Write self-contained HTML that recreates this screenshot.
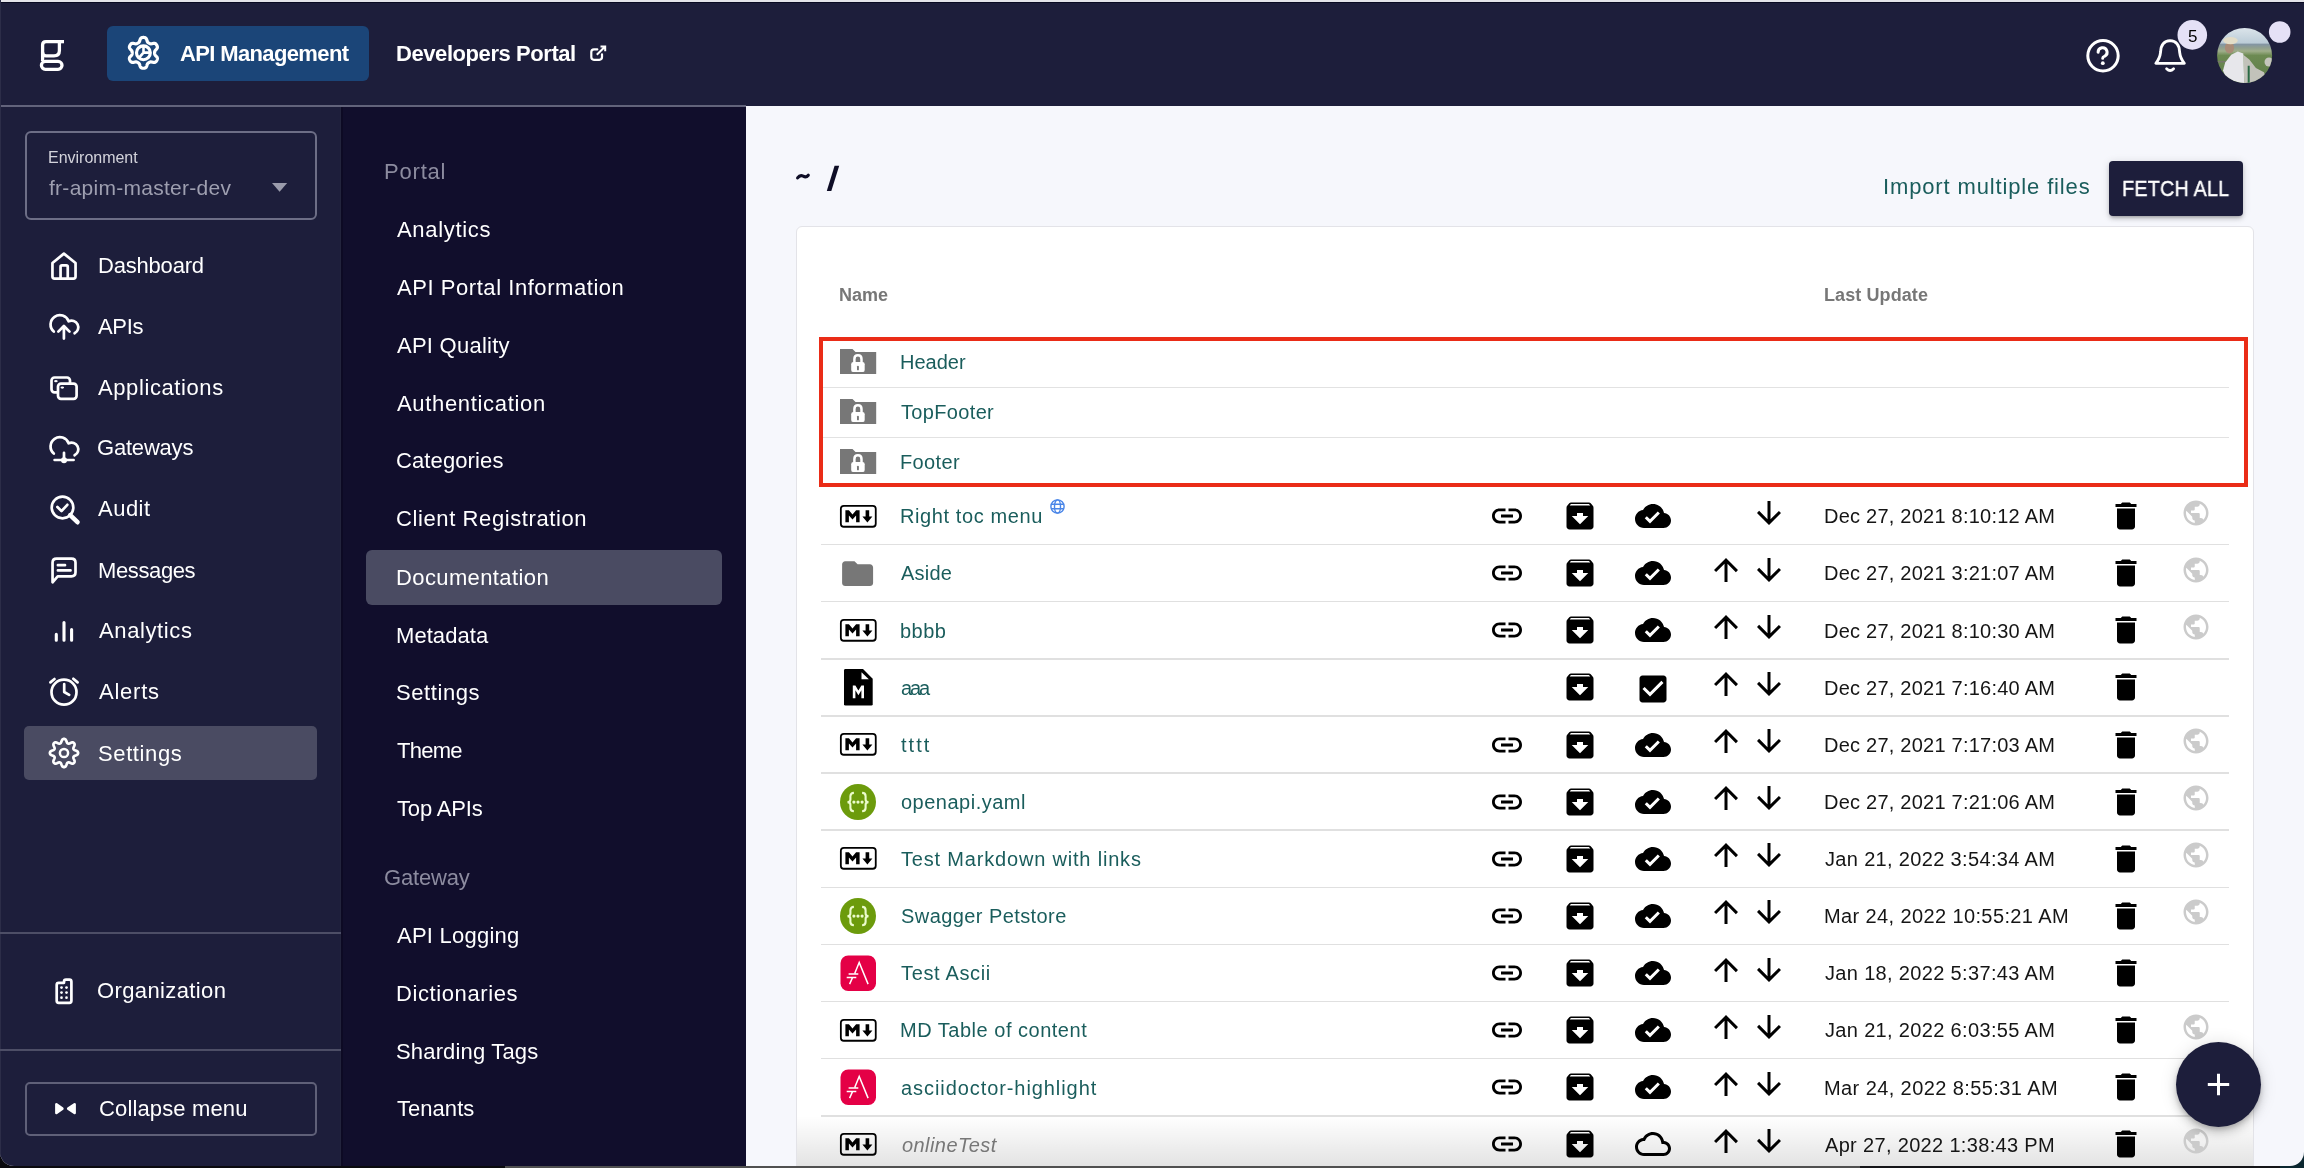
<!DOCTYPE html>
<html><head><meta charset="utf-8"><style>
html,body{margin:0;padding:0;width:2304px;height:1168px;overflow:hidden;background:#505050}
body{position:relative;font-family:"Liberation Sans",sans-serif}
.tx{position:absolute;white-space:pre;will-change:transform}
.ic{position:absolute;overflow:visible}
</style></head><body>
<div style="position:absolute;left:0;top:1140px;width:505px;height:28px;background:#0a0a0e"></div>
<div style="position:absolute;left:1860px;top:1140px;width:444px;height:28px;background:#141418"></div>
<div style="position:absolute;left:2280px;top:1140px;width:24px;height:28px;background:#0b2730"></div>
<div style="position:absolute;left:0;top:0;width:2304px;height:1166px;border-radius:0 0 14px 14px;overflow:hidden;background:#f6f7fc">
<div style="position:absolute;left:0;top:0;width:2304px;height:106px;background:#1d1e3b"></div>
<div style="position:absolute;left:0;top:0;width:2304px;height:1.5px;background:#e4e4ea"></div>
<div style="position:absolute;left:0;top:1.5px;width:2304px;height:1.5px;background:#090a22"></div>
<div style="position:absolute;left:0;top:105px;width:746px;height:2px;background:#62637b"></div>
<div style="position:absolute;left:745px;top:107px;width:1px;height:1061px;background:#07051c"></div>
<div style="position:absolute;left:0;top:107px;width:341px;height:1061px;background:#1d1e3b"></div>
<div style="position:absolute;left:341px;top:107px;width:405px;height:1061px;background:#110e2c"></div>
<div style="position:absolute;left:0;top:0;width:1px;height:1168px;background:#2c2d48"></div>
<div style="position:absolute;left:340px;top:107px;width:1px;height:1061px;background:#23243d"></div>
<div style="position:absolute;left:341px;top:107px;width:2px;height:1061px;background:#0d0a24"></div>
<div style="position:absolute;left:107px;top:26px;width:262px;height:55px;border-radius:6px;background:#1b4578"></div>
<div style="position:absolute;left:24.5px;top:131px;width:288px;height:85px;border:2px solid #6d6e86;border-radius:6px"></div>
<svg class="ic" style="left:272px;top:182.8px;width:15.2px;height:8.8px" viewBox="0 0 15.2 8.8"><path d="M0 0H15.2L7.6 8.8Z" fill="#9a9bab"/></svg>
<div style="position:absolute;left:24px;top:726px;width:293px;height:54px;border-radius:5px;background:#4a4b62"></div>
<div style="position:absolute;left:366px;top:550px;width:356px;height:55px;border-radius:6px;background:#4a4b62"></div>
<div style="position:absolute;left:0;top:932px;width:341px;height:2px;background:#4d4e66"></div>
<div style="position:absolute;left:0;top:1049px;width:341px;height:2px;background:#4d4e66"></div>
<div style="position:absolute;left:24.5px;top:1081.5px;width:288px;height:50px;border:2px solid #5f6078;border-radius:5px"></div>
<div style="position:absolute;left:2109px;top:161px;width:134px;height:55px;border-radius:4px;background:#1d1e3b;box-shadow:0 3px 3px -2px rgba(0,0,0,.2),0 3px 4px 0 rgba(0,0,0,.14),0 1px 8px 0 rgba(0,0,0,.12)"></div>
<div style="position:absolute;left:796px;top:226px;width:1456px;height:1000px;border:1px solid #e3e3e8;border-radius:6px;background:#fff"></div>
<svg class="ic" style="left:790px;top:160px;width:60px;height:36px" viewBox="790 160 60 36"><path d="M797.6 177.9Q800 174.6 803.2 176.2Q806.2 177.8 808.3 175.2" fill="none" stroke="#0e0d26" stroke-width="3.1" stroke-linecap="round"/><path d="M834.6 165.8H839.2L831.3 190.9H826.8Z" fill="#0e0d26"/></svg>
<div style="position:absolute;left:823px;top:386.5px;width:1406px;height:1px;background:#e2e2e2"></div>
<div style="position:absolute;left:823px;top:436.5px;width:1406px;height:1px;background:#e2e2e2"></div>
<div style="position:absolute;left:821px;top:543.80px;width:1408px;height:1.5px;background:#e0e0e0"></div>
<div style="position:absolute;left:821px;top:600.93px;width:1408px;height:1.5px;background:#e0e0e0"></div>
<div style="position:absolute;left:821px;top:658.06px;width:1408px;height:1.5px;background:#e0e0e0"></div>
<div style="position:absolute;left:821px;top:715.19px;width:1408px;height:1.5px;background:#e0e0e0"></div>
<div style="position:absolute;left:821px;top:772.32px;width:1408px;height:1.5px;background:#e0e0e0"></div>
<div style="position:absolute;left:821px;top:829.45px;width:1408px;height:1.5px;background:#e0e0e0"></div>
<div style="position:absolute;left:821px;top:886.58px;width:1408px;height:1.5px;background:#e0e0e0"></div>
<div style="position:absolute;left:821px;top:943.71px;width:1408px;height:1.5px;background:#e0e0e0"></div>
<div style="position:absolute;left:821px;top:1000.84px;width:1408px;height:1.5px;background:#e0e0e0"></div>
<div style="position:absolute;left:821px;top:1057.97px;width:1408px;height:1.5px;background:#e0e0e0"></div>
<div style="position:absolute;left:821px;top:1115.10px;width:1408px;height:1.5px;background:#e0e0e0"></div>
<div style="position:absolute;left:819px;top:337px;width:1421px;height:142px;border:4px solid #ea2c17"></div>
<div style="position:absolute;left:797px;top:1116px;width:1456px;height:50px;background:linear-gradient(rgba(0,0,0,0),rgba(0,0,0,.11))"></div>
<svg class="ic" style="left:0;top:0;width:2304px;height:1168px" viewBox="0 0 2304 1168"><g fill="none" stroke="#ffffff" stroke-width="2.7" stroke-linecap="round" stroke-linejoin="round"><path d="M52.45 263 L63.9 253.6 L75.55 263 V276.5 Q75.55 278.55 73.5 278.55 H54.5 Q52.45 278.55 52.45 276.5 Z"/><path d="M60.55 278.5 V266.9 Q60.55 265.45 62 265.45 H66.3 Q67.75 265.45 67.75 266.9 V278.5"/><path d="M53.8 331.5 A9.3 9.3 0 1 1 68.6 321.3 A5.4 5.4 0 0 1 74.6 333.3"/><path d="M63.9 338.6 V326 M58.3 331.6 L63.9 326 L69.5 331.6"/><rect x="51.5" y="377.5" width="18.5" height="14.8" rx="3"/><rect x="58" y="383.6" width="18.6" height="15.2" rx="3" fill="#1d1e3b"/><path d="M53.8 453.5 A9.3 9.3 0 1 1 68.6 443.3 A5.4 5.4 0 0 1 74.6 455.3"/><path d="M64 452.8 V459.5 M54.6 460 H73.6"/><circle cx="62.5" cy="507.5" r="10.8"/><path d="M57.4 507 L61.5 511.1 L67.3 504.8"/><path d="M52.55 582.3 V562.6 Q52.55 558.55 56.6 558.55 H71.45 Q75.5 558.55 75.5 562.6 V572.35 Q75.5 576.4 71.45 576.4 H57.7 Z"/><path d="M57.9 565.2 H65 M57.9 570.4 H70.5"/><circle cx="64" cy="692.2" r="12.5"/><path d="M64.2 684.2 V692 L69.2 694.9 M50.4 682.4 L54.5 679 M73.3 678.8 L77.6 682.4"/><path d="M78.10 753.00 L78.07 753.37 L77.98 753.73 L77.83 754.09 L77.58 754.43 L77.24 754.74 L76.79 755.03 L76.25 755.27 L75.68 755.48 L75.14 755.67 L74.67 755.86 L74.30 756.05 L74.02 756.25 L73.80 756.47 L73.64 756.70 L73.52 756.94 L73.43 757.20 L73.38 757.48 L73.38 757.78 L73.44 758.13 L73.57 758.52 L73.77 758.98 L74.01 759.50 L74.27 760.06 L74.47 760.61 L74.59 761.13 L74.61 761.60 L74.55 762.01 L74.41 762.37 L74.21 762.69 L73.97 762.97 L73.69 763.21 L73.37 763.41 L73.01 763.55 L72.60 763.61 L72.13 763.59 L71.61 763.47 L71.06 763.27 L70.50 763.01 L69.98 762.77 L69.52 762.57 L69.13 762.44 L68.78 762.38 L68.48 762.38 L68.20 762.43 L67.94 762.52 L67.70 762.64 L67.47 762.80 L67.25 763.02 L67.05 763.30 L66.86 763.67 L66.67 764.14 L66.48 764.68 L66.27 765.25 L66.03 765.79 L65.74 766.24 L65.43 766.58 L65.09 766.83 L64.73 766.98 L64.37 767.07 L64.00 767.10 L63.63 767.07 L63.27 766.98 L62.91 766.83 L62.57 766.58 L62.26 766.24 L61.97 765.79 L61.73 765.25 L61.52 764.68 L61.33 764.14 L61.14 763.67 L60.95 763.30 L60.75 763.02 L60.53 762.80 L60.30 762.64 L60.06 762.52 L59.80 762.43 L59.52 762.38 L59.22 762.38 L58.87 762.44 L58.48 762.57 L58.02 762.77 L57.50 763.01 L56.94 763.27 L56.39 763.47 L55.87 763.59 L55.40 763.61 L54.99 763.55 L54.63 763.41 L54.31 763.21 L54.03 762.97 L53.79 762.69 L53.59 762.37 L53.45 762.01 L53.39 761.60 L53.41 761.13 L53.53 760.61 L53.73 760.06 L53.99 759.50 L54.23 758.98 L54.43 758.52 L54.56 758.13 L54.62 757.78 L54.62 757.48 L54.57 757.20 L54.48 756.94 L54.36 756.70 L54.20 756.47 L53.98 756.25 L53.70 756.05 L53.33 755.86 L52.86 755.67 L52.32 755.48 L51.75 755.27 L51.21 755.03 L50.76 754.74 L50.42 754.43 L50.17 754.09 L50.02 753.73 L49.93 753.37 L49.90 753.00 L49.93 752.63 L50.02 752.27 L50.17 751.91 L50.42 751.57 L50.76 751.26 L51.21 750.97 L51.75 750.73 L52.32 750.52 L52.86 750.33 L53.33 750.14 L53.70 749.95 L53.98 749.75 L54.20 749.53 L54.36 749.30 L54.48 749.06 L54.57 748.80 L54.62 748.52 L54.62 748.22 L54.56 747.87 L54.43 747.48 L54.23 747.02 L53.99 746.50 L53.73 745.94 L53.53 745.39 L53.41 744.87 L53.39 744.40 L53.45 743.99 L53.59 743.63 L53.79 743.31 L54.03 743.03 L54.31 742.79 L54.63 742.59 L54.99 742.45 L55.40 742.39 L55.87 742.41 L56.39 742.53 L56.94 742.73 L57.50 742.99 L58.02 743.23 L58.48 743.43 L58.87 743.56 L59.22 743.62 L59.52 743.62 L59.80 743.57 L60.06 743.48 L60.30 743.36 L60.53 743.20 L60.75 742.98 L60.95 742.70 L61.14 742.33 L61.33 741.86 L61.52 741.32 L61.73 740.75 L61.97 740.21 L62.26 739.76 L62.57 739.42 L62.91 739.17 L63.27 739.02 L63.63 738.93 L64.00 738.90 L64.37 738.93 L64.73 739.02 L65.09 739.17 L65.43 739.42 L65.74 739.76 L66.03 740.21 L66.27 740.75 L66.48 741.32 L66.67 741.86 L66.86 742.33 L67.05 742.70 L67.25 742.98 L67.47 743.20 L67.70 743.36 L67.94 743.48 L68.20 743.57 L68.48 743.62 L68.78 743.62 L69.13 743.56 L69.52 743.43 L69.98 743.23 L70.50 742.99 L71.06 742.73 L71.61 742.53 L72.13 742.41 L72.60 742.39 L73.01 742.45 L73.37 742.59 L73.69 742.79 L73.97 743.03 L74.21 743.31 L74.41 743.63 L74.55 743.99 L74.61 744.40 L74.59 744.87 L74.47 745.39 L74.27 745.94 L74.01 746.50 L73.77 747.02 L73.57 747.48 L73.44 747.87 L73.38 748.22 L73.38 748.52 L73.43 748.80 L73.52 749.06 L73.64 749.30 L73.80 749.53 L74.02 749.75 L74.30 749.95 L74.67 750.14 L75.14 750.33 L75.68 750.52 L76.25 750.73 L76.79 750.97 L77.24 751.26 L77.58 751.57 L77.83 751.91 L77.98 752.27 L78.07 752.63Z"/><circle cx="64" cy="753" r="4.1" stroke-width="2.5"/><path d="M56.7 1001 V984.8 Q56.7 982.8 58.7 982.8 H64 V981.7 Q64 979.7 66 979.7 H69.4 Q71.4 979.7 71.4 981.7 V1000.8 Q71.4 1002.8 69.4 1002.8 H58.7 Q56.7 1002.8 56.7 1000.8Z"/><path d="M597.3 49.4 H594 Q591.3 49.4 591.3 52.1 V57.1 Q591.3 59.8 594 59.8 H599.3 Q602 59.8 602 57.1 V54.3" stroke-width="2.2"/><path d="M596.8 54.8 L604.6 47 M600.5 46.6 H605.2 V51.3" stroke-width="2" stroke-linecap="butt" stroke-linejoin="miter"/><path d="M154.60 52.85 L154.60 53.14 L154.61 53.44 L154.64 53.73 L154.68 54.04 L154.75 54.34 L154.88 54.67 L155.09 55.02 L155.39 55.40 L155.79 55.82 L156.25 56.29 L156.69 56.79 L157.04 57.28 L157.27 57.76 L157.38 58.22 L157.40 58.65 L157.34 59.06 L157.24 59.45 L157.10 59.83 L156.93 60.19 L156.74 60.55 L156.52 60.89 L156.29 61.22 L156.03 61.53 L155.75 61.82 L155.42 62.07 L155.04 62.27 L154.59 62.41 L154.06 62.45 L153.45 62.39 L152.80 62.25 L152.17 62.09 L151.60 61.96 L151.12 61.89 L150.72 61.88 L150.37 61.93 L150.07 62.02 L149.78 62.14 L149.52 62.27 L149.26 62.41 L149.00 62.55 L148.75 62.70 L148.50 62.86 L148.25 63.02 L148.01 63.21 L147.78 63.43 L147.57 63.70 L147.37 64.05 L147.19 64.51 L147.02 65.07 L146.84 65.70 L146.64 66.33 L146.38 66.88 L146.08 67.32 L145.74 67.64 L145.38 67.87 L145.00 68.03 L144.60 68.13 L144.20 68.20 L143.80 68.24 L143.40 68.25 L143.00 68.24 L142.60 68.20 L142.20 68.13 L141.80 68.03 L141.42 67.87 L141.06 67.64 L140.72 67.32 L140.42 66.88 L140.16 66.33 L139.96 65.70 L139.78 65.07 L139.61 64.51 L139.43 64.05 L139.23 63.70 L139.02 63.43 L138.79 63.21 L138.55 63.02 L138.30 62.86 L138.05 62.70 L137.80 62.55 L137.54 62.41 L137.28 62.27 L137.02 62.14 L136.73 62.02 L136.43 61.93 L136.08 61.88 L135.68 61.89 L135.20 61.96 L134.63 62.09 L134.00 62.25 L133.35 62.39 L132.74 62.45 L132.21 62.41 L131.76 62.27 L131.38 62.07 L131.05 61.82 L130.77 61.53 L130.51 61.22 L130.28 60.89 L130.06 60.55 L129.87 60.19 L129.70 59.83 L129.56 59.45 L129.46 59.06 L129.40 58.65 L129.42 58.22 L129.53 57.76 L129.76 57.28 L130.11 56.79 L130.55 56.29 L131.01 55.82 L131.41 55.40 L131.71 55.02 L131.92 54.67 L132.05 54.34 L132.12 54.04 L132.16 53.73 L132.19 53.44 L132.20 53.14 L132.20 52.85 L132.20 52.56 L132.19 52.26 L132.16 51.97 L132.12 51.66 L132.05 51.36 L131.92 51.03 L131.71 50.68 L131.41 50.30 L131.01 49.88 L130.55 49.41 L130.11 48.91 L129.76 48.42 L129.53 47.94 L129.42 47.48 L129.40 47.05 L129.46 46.64 L129.56 46.25 L129.70 45.87 L129.87 45.51 L130.06 45.15 L130.28 44.81 L130.51 44.48 L130.77 44.17 L131.05 43.88 L131.38 43.63 L131.76 43.43 L132.21 43.29 L132.74 43.25 L133.35 43.31 L134.00 43.45 L134.63 43.61 L135.20 43.74 L135.68 43.81 L136.08 43.82 L136.43 43.77 L136.73 43.68 L137.02 43.56 L137.28 43.43 L137.54 43.29 L137.80 43.15 L138.05 43.00 L138.30 42.84 L138.55 42.68 L138.79 42.49 L139.02 42.27 L139.23 42.00 L139.43 41.65 L139.61 41.19 L139.78 40.63 L139.96 40.00 L140.16 39.37 L140.42 38.82 L140.72 38.38 L141.06 38.06 L141.42 37.83 L141.80 37.67 L142.20 37.57 L142.60 37.50 L143.00 37.46 L143.40 37.45 L143.80 37.46 L144.20 37.50 L144.60 37.57 L145.00 37.67 L145.38 37.83 L145.74 38.06 L146.08 38.38 L146.38 38.82 L146.64 39.37 L146.84 40.00 L147.02 40.63 L147.19 41.19 L147.37 41.65 L147.57 42.00 L147.78 42.27 L148.01 42.49 L148.25 42.68 L148.50 42.84 L148.75 43.00 L149.00 43.15 L149.26 43.29 L149.52 43.43 L149.78 43.56 L150.07 43.68 L150.37 43.77 L150.72 43.82 L151.12 43.81 L151.60 43.74 L152.17 43.61 L152.80 43.45 L153.45 43.31 L154.06 43.25 L154.59 43.29 L155.04 43.43 L155.42 43.63 L155.75 43.88 L156.03 44.17 L156.29 44.48 L156.52 44.81 L156.74 45.15 L156.93 45.51 L157.10 45.87 L157.24 46.25 L157.34 46.64 L157.40 47.05 L157.38 47.48 L157.27 47.94 L157.04 48.42 L156.69 48.91 L156.25 49.41 L155.79 49.88 L155.39 50.30 L155.09 50.68 L154.88 51.03 L154.75 51.36 L154.68 51.66 L154.64 51.97 L154.61 52.26 L154.60 52.56Z" stroke-width="3.2"/><circle cx="143.4" cy="52.85" r="6.9" stroke-width="3.2"/><path d="M143.5 52.6 V46.5 M143.5 52.6 H149.8 M143.5 52.6 L139.6 57.2" stroke-width="2.6"/><path d="M12.6 11.8" /></g><g fill="#ffffff"><circle cx="64" cy="460.3" r="3"/><path d="M70.2 515.2 L77.5 522.2" stroke="#fff" stroke-width="4.6" stroke-linecap="round"/><circle cx="61.5" cy="987.6" r="1.35"/><circle cx="61.5" cy="992.6" r="1.35"/><circle cx="61.5" cy="997.7" r="1.35"/><circle cx="66.5" cy="987.6" r="1.35"/><circle cx="66.5" cy="992.6" r="1.35"/><circle cx="66.5" cy="997.7" r="1.35"/><ellipse cx="55.9" cy="381.2" rx="1.8" ry="1.1"/><ellipse cx="62.3" cy="387.6" rx="1.8" ry="1.1"/></g><g stroke="#fff" stroke-width="3.1" stroke-linecap="round"><path d="M56.3 634.4 V640.3 M64 622.5 V640.3 M71.6 629.6 V640.3"/></g><g fill="#fff" stroke="#fff" stroke-width="2.6" stroke-linejoin="round"><path d="M56.4 1104.3 V1113 L62.4 1108.65Z"/><path d="M74.6 1104.3 V1113 L68.2 1108.65Z"/></g><g fill="none" stroke="#fff" stroke-width="3.3" stroke-linejoin="round"><path d="M61.2 41.6 H46 Q42.6 41.6 42.6 45 V52.4 Q42.6 55.8 46 55.8 H54 Q59.4 55.8 59.4 50.4 V41.6"/><path d="M42.6 52 V61"/><rect x="41.4" y="61.4" width="20.6" height="7.9" rx="3.95"/></g><path d="M59.4 40 H64 V43.3 L59.4 43.3Z" fill="#fff"/><g fill="none" stroke="#fff" stroke-width="3" stroke-linecap="round"><circle cx="2103" cy="55.7" r="15.2"/><path d="M2098.1 52.3 A4.5 4.5 0 1 1 2104.8 56.2 Q2102.7 57 2102.7 58.2"/></g><circle cx="2102.8" cy="63.2" r="1.9" fill="#fff"/><g fill="none" stroke="#fff" stroke-width="2.8" stroke-linejoin="round" stroke-linecap="round"><path d="M2155.8 63.3 H2184.4 Q2180.3 58.5 2179.6 52 Q2179.2 41 2170.1 40.6 Q2161 41 2160.6 52 Q2159.9 58.5 2155.8 63.3Z"/><path d="M2166.6 68.8 Q2170.1 72.3 2173.6 68.8"/></g><circle cx="2192.3" cy="34.9" r="14.8" fill="#e5e1f6"/><circle cx="2279.7" cy="32" r="10.8" fill="#e5e1f6"/><defs><linearGradient id="av" x1="0" y1="0" x2="0" y2="1"><stop offset="0" stop-color="#dbe4ea"/><stop offset="0.27" stop-color="#bccdd8"/><stop offset="0.30" stop-color="#8496a2"/><stop offset="0.36" stop-color="#90a090"/><stop offset="0.42" stop-color="#9fae8a"/><stop offset="0.5" stop-color="#6c8a52"/><stop offset="1" stop-color="#5e7c48"/></linearGradient><clipPath id="avc"><circle cx="2244.6" cy="55.5" r="27.5"/></clipPath></defs><circle cx="2244.6" cy="55.5" r="27.5" fill="url(#av)"/><g clip-path="url(#avc)"><path d="M2243.3 54.7 L2249.3 59.6 L2255.9 67.9 L2264 72.2 L2266 79 L2252 84 L2244.3 84Z" fill="#c2c2ba"/><circle cx="2269" cy="62" r="4.5" fill="#c6c6be"/><path d="M2217 61.8 H2226" stroke="#77776a" stroke-width="1.6"/><path d="M2248.7 65.7 V84" stroke="#2a6a45" stroke-width="2"/><path d="M2225.2 62.4 L2231.2 54.7 L2237.8 51.4 L2243.3 53.6 L2244.3 84 L2226.3 79 L2223 70.6Z" fill="#e7e7eb"/><ellipse cx="2229.5" cy="47.8" rx="4.6" ry="5.6" fill="#a98c78"/><ellipse cx="2230.5" cy="40.6" rx="7.2" ry="3.6" fill="#e3ddc8"/></g></svg>
<svg class="ic" style="left:839.50px;top:504.70px;width:37px;height:23px" viewBox="0 0 37 23"><rect x="0.85" y="0.85" width="34.9" height="20.9" rx="3" fill="none" stroke="#000" stroke-width="1.8"/><path d="M5.4 5.3H8.9L12.5 9.6L16.1 5.3H19.6V17.3H16.1V10.4L12.5 14.5L8.9 10.4V17.3H5.4Z" fill="#000"/><path d="M25.6 5.3H29.2V11.6H32.4L27.4 17.6L22.4 11.6H25.6Z" fill="#000"/></svg>
<svg class="ic" style="left:1489.00px;top:498.00px;width:36px;height:36px" viewBox="0 0 24 24"><path fill="#000" d="M3.9 12c0-1.71 1.39-3.1 3.1-3.1h4V7H7c-2.76 0-5 2.24-5 5s2.24 5 5 5h4v-1.9H7c-1.71 0-3.1-1.39-3.1-3.1zM8 13h8v-2H8v2zm9-6h-4v1.9h4c1.71 0 3.1 1.39 3.1 3.1s-1.39 3.1-3.1 3.1h-4V17h4c2.76 0 5-2.24 5-5s-2.24-5-5-5z"/></svg>
<svg class="ic" style="left:1562.00px;top:498.00px;width:36px;height:36px" viewBox="0 0 24 24"><path fill="#000" d="M20.54 5.23l-1.39-1.68C18.88 3.21 18.47 3 18 3H6c-.47 0-.88.21-1.16.55L3.46 5.23C3.17 5.57 3 6.02 3 6.5V19c0 1.1.9 2 2 2h14c1.1 0 2-.9 2-2V6.5c0-.48-.17-.93-.46-1.27zM12 17.5L6.5 12H10v-2h4v2h3.5L12 17.5zM5.12 5l.81-1h12l.94 1H5.12z"/></svg>
<svg class="ic" style="left:1635.00px;top:498.00px;width:36px;height:36px" viewBox="0 0 24 24"><path fill="#000" d="M19.35 10.04C18.67 6.59 15.64 4 12 4 9.11 4 6.6 5.64 5.35 8.04 2.34 8.36 0 10.91 0 14c0 3.31 2.69 6 6 6h13c2.76 0 5-2.24 5-5 0-2.64-2.05-4.78-4.65-4.96zM10 17l-3.5-3.5 1.41-1.41L10 14.17 15.18 9l1.41 1.41L10 17z"/></svg>
<svg class="ic" style="left:1751.00px;top:494.50px;width:36px;height:36px" viewBox="0 0 24 24"><path fill="#000" d="M20 12l-1.41-1.41L13 16.17V4h-2v12.17l-5.58-5.59L4 12l8 8 8-8z"/></svg>
<svg class="ic" style="left:2107.70px;top:498.00px;width:36px;height:36px" viewBox="0 0 24 24"><path fill="#000" d="M6 19c0 1.1.9 2 2 2h8c1.1 0 2-.9 2-2V7H6v12zM19 4h-3.5l-1-1h-5l-1 1H5v2h14V4z"/></svg>
<svg class="ic" style="left:2180.60px;top:497.50px;width:30px;height:30px" viewBox="0 0 24 24"><path fill="#cbcbcb" d="M12 2C6.48 2 2 6.48 2 12s4.48 10 10 10 10-4.48 10-10S17.52 2 12 2zm-1 17.93c-3.95-.49-7-3.85-7-7.93 0-.62.08-1.21.21-1.79L9 15v1c0 1.1.9 2 2 2v1.93zm6.9-2.54c-.26-.81-1-1.39-1.9-1.39h-1v-3c0-.55-.45-1-1-1H8v-2h2c.55 0 1-.45 1-1V7h2c1.1 0 2-.9 2-2v-.41c2.93 1.19 5 4.06 5 7.41 0 2.08-.8 3.97-2.1 5.39z"/></svg>
<svg class="ic" style="left:1050px;top:498.5px;width:15px;height:15px" viewBox="0 0 15 15"><g fill="none" stroke="#4a86e8" stroke-width="1.4"><circle cx="7.5" cy="7.5" r="6.6"/><ellipse cx="7.5" cy="7.5" rx="3" ry="6.6"/><path d="M1 5.2H14M1 9.8H14"/></g></svg>
<svg class="ic" style="left:838.90px;top:554.53px;width:37.2px;height:37.2px" viewBox="0 0 24 24"><path fill="#777777" d="M10 4H4c-1.1 0-1.99.9-1.99 2L2 18c0 1.1.9 2 2 2h16c1.1 0 2-.9 2-2V8c0-1.1-.9-2-2-2h-8l-2-2z"/></svg>
<svg class="ic" style="left:1489.00px;top:555.13px;width:36px;height:36px" viewBox="0 0 24 24"><path fill="#000" d="M3.9 12c0-1.71 1.39-3.1 3.1-3.1h4V7H7c-2.76 0-5 2.24-5 5s2.24 5 5 5h4v-1.9H7c-1.71 0-3.1-1.39-3.1-3.1zM8 13h8v-2H8v2zm9-6h-4v1.9h4c1.71 0 3.1 1.39 3.1 3.1s-1.39 3.1-3.1 3.1h-4V17h4c2.76 0 5-2.24 5-5s-2.24-5-5-5z"/></svg>
<svg class="ic" style="left:1562.00px;top:555.13px;width:36px;height:36px" viewBox="0 0 24 24"><path fill="#000" d="M20.54 5.23l-1.39-1.68C18.88 3.21 18.47 3 18 3H6c-.47 0-.88.21-1.16.55L3.46 5.23C3.17 5.57 3 6.02 3 6.5V19c0 1.1.9 2 2 2h14c1.1 0 2-.9 2-2V6.5c0-.48-.17-.93-.46-1.27zM12 17.5L6.5 12H10v-2h4v2h3.5L12 17.5zM5.12 5l.81-1h12l.94 1H5.12z"/></svg>
<svg class="ic" style="left:1635.00px;top:555.13px;width:36px;height:36px" viewBox="0 0 24 24"><path fill="#000" d="M19.35 10.04C18.67 6.59 15.64 4 12 4 9.11 4 6.6 5.64 5.35 8.04 2.34 8.36 0 10.91 0 14c0 3.31 2.69 6 6 6h13c2.76 0 5-2.24 5-5 0-2.64-2.05-4.78-4.65-4.96zM10 17l-3.5-3.5 1.41-1.41L10 14.17 15.18 9l1.41 1.41L10 17z"/></svg>
<svg class="ic" style="left:1708.30px;top:551.63px;width:36px;height:36px" viewBox="0 0 24 24"><path fill="#000" d="M4 12l1.41 1.41L11 7.83V20h2V7.83l5.58 5.59L20 12l-8-8-8 8z"/></svg>
<svg class="ic" style="left:1751.00px;top:551.63px;width:36px;height:36px" viewBox="0 0 24 24"><path fill="#000" d="M20 12l-1.41-1.41L13 16.17V4h-2v12.17l-5.58-5.59L4 12l8 8 8-8z"/></svg>
<svg class="ic" style="left:2107.70px;top:555.13px;width:36px;height:36px" viewBox="0 0 24 24"><path fill="#000" d="M6 19c0 1.1.9 2 2 2h8c1.1 0 2-.9 2-2V7H6v12zM19 4h-3.5l-1-1h-5l-1 1H5v2h14V4z"/></svg>
<svg class="ic" style="left:2180.60px;top:554.63px;width:30px;height:30px" viewBox="0 0 24 24"><path fill="#cbcbcb" d="M12 2C6.48 2 2 6.48 2 12s4.48 10 10 10 10-4.48 10-10S17.52 2 12 2zm-1 17.93c-3.95-.49-7-3.85-7-7.93 0-.62.08-1.21.21-1.79L9 15v1c0 1.1.9 2 2 2v1.93zm6.9-2.54c-.26-.81-1-1.39-1.9-1.39h-1v-3c0-.55-.45-1-1-1H8v-2h2c.55 0 1-.45 1-1V7h2c1.1 0 2-.9 2-2v-.41c2.93 1.19 5 4.06 5 7.41 0 2.08-.8 3.97-2.1 5.39z"/></svg>
<svg class="ic" style="left:839.50px;top:618.96px;width:37px;height:23px" viewBox="0 0 37 23"><rect x="0.85" y="0.85" width="34.9" height="20.9" rx="3" fill="none" stroke="#000" stroke-width="1.8"/><path d="M5.4 5.3H8.9L12.5 9.6L16.1 5.3H19.6V17.3H16.1V10.4L12.5 14.5L8.9 10.4V17.3H5.4Z" fill="#000"/><path d="M25.6 5.3H29.2V11.6H32.4L27.4 17.6L22.4 11.6H25.6Z" fill="#000"/></svg>
<svg class="ic" style="left:1489.00px;top:612.26px;width:36px;height:36px" viewBox="0 0 24 24"><path fill="#000" d="M3.9 12c0-1.71 1.39-3.1 3.1-3.1h4V7H7c-2.76 0-5 2.24-5 5s2.24 5 5 5h4v-1.9H7c-1.71 0-3.1-1.39-3.1-3.1zM8 13h8v-2H8v2zm9-6h-4v1.9h4c1.71 0 3.1 1.39 3.1 3.1s-1.39 3.1-3.1 3.1h-4V17h4c2.76 0 5-2.24 5-5s-2.24-5-5-5z"/></svg>
<svg class="ic" style="left:1562.00px;top:612.26px;width:36px;height:36px" viewBox="0 0 24 24"><path fill="#000" d="M20.54 5.23l-1.39-1.68C18.88 3.21 18.47 3 18 3H6c-.47 0-.88.21-1.16.55L3.46 5.23C3.17 5.57 3 6.02 3 6.5V19c0 1.1.9 2 2 2h14c1.1 0 2-.9 2-2V6.5c0-.48-.17-.93-.46-1.27zM12 17.5L6.5 12H10v-2h4v2h3.5L12 17.5zM5.12 5l.81-1h12l.94 1H5.12z"/></svg>
<svg class="ic" style="left:1635.00px;top:612.26px;width:36px;height:36px" viewBox="0 0 24 24"><path fill="#000" d="M19.35 10.04C18.67 6.59 15.64 4 12 4 9.11 4 6.6 5.64 5.35 8.04 2.34 8.36 0 10.91 0 14c0 3.31 2.69 6 6 6h13c2.76 0 5-2.24 5-5 0-2.64-2.05-4.78-4.65-4.96zM10 17l-3.5-3.5 1.41-1.41L10 14.17 15.18 9l1.41 1.41L10 17z"/></svg>
<svg class="ic" style="left:1708.30px;top:608.76px;width:36px;height:36px" viewBox="0 0 24 24"><path fill="#000" d="M4 12l1.41 1.41L11 7.83V20h2V7.83l5.58 5.59L20 12l-8-8-8 8z"/></svg>
<svg class="ic" style="left:1751.00px;top:608.76px;width:36px;height:36px" viewBox="0 0 24 24"><path fill="#000" d="M20 12l-1.41-1.41L13 16.17V4h-2v12.17l-5.58-5.59L4 12l8 8 8-8z"/></svg>
<svg class="ic" style="left:2107.70px;top:612.26px;width:36px;height:36px" viewBox="0 0 24 24"><path fill="#000" d="M6 19c0 1.1.9 2 2 2h8c1.1 0 2-.9 2-2V7H6v12zM19 4h-3.5l-1-1h-5l-1 1H5v2h14V4z"/></svg>
<svg class="ic" style="left:2180.60px;top:611.76px;width:30px;height:30px" viewBox="0 0 24 24"><path fill="#cbcbcb" d="M12 2C6.48 2 2 6.48 2 12s4.48 10 10 10 10-4.48 10-10S17.52 2 12 2zm-1 17.93c-3.95-.49-7-3.85-7-7.93 0-.62.08-1.21.21-1.79L9 15v1c0 1.1.9 2 2 2v1.93zm6.9-2.54c-.26-.81-1-1.39-1.9-1.39h-1v-3c0-.55-.45-1-1-1H8v-2h2c.55 0 1-.45 1-1V7h2c1.1 0 2-.9 2-2v-.41c2.93 1.19 5 4.06 5 7.41 0 2.08-.8 3.97-2.1 5.39z"/></svg>
<svg class="ic" style="left:843.5px;top:669.09px;width:29px;height:37px" viewBox="0 0 29 37"><path d="M1.5 0H19L28.7 9.7V35.2Q28.7 36.6 27.3 36.6H1.5Q0 36.6 0 35.2V1.4Q0 0 1.5 0Z" fill="#000"/><path d="M17.5 3.3V10.3H24.8Z" fill="#fff"/><path d="M8.8 29.2V16.5H11.4L14.4 21.6L17.4 16.5H20V29.2H17.4V21.2L14.4 26.2L11.4 21.2V29.2Z" fill="#fff"/></svg>
<svg class="ic" style="left:1562.00px;top:669.39px;width:36px;height:36px" viewBox="0 0 24 24"><path fill="#000" d="M20.54 5.23l-1.39-1.68C18.88 3.21 18.47 3 18 3H6c-.47 0-.88.21-1.16.55L3.46 5.23C3.17 5.57 3 6.02 3 6.5V19c0 1.1.9 2 2 2h14c1.1 0 2-.9 2-2V6.5c0-.48-.17-.93-.46-1.27zM12 17.5L6.5 12H10v-2h4v2h3.5L12 17.5zM5.12 5l.81-1h12l.94 1H5.12z"/></svg>
<svg class="ic" style="left:1635.20px;top:670.69px;width:36px;height:36px" viewBox="0 0 24 24"><path fill="#000" d="M19 3H5c-1.11 0-2 .9-2 2v14c0 1.1.89 2 2 2h14c1.11 0 2-.9 2-2V5c0-1.1-.89-2-2-2zm-9 14l-5-5 1.41-1.41L10 14.17l7.59-7.59L19 8l-9 9z"/></svg>
<svg class="ic" style="left:1708.30px;top:665.89px;width:36px;height:36px" viewBox="0 0 24 24"><path fill="#000" d="M4 12l1.41 1.41L11 7.83V20h2V7.83l5.58 5.59L20 12l-8-8-8 8z"/></svg>
<svg class="ic" style="left:1751.00px;top:665.89px;width:36px;height:36px" viewBox="0 0 24 24"><path fill="#000" d="M20 12l-1.41-1.41L13 16.17V4h-2v12.17l-5.58-5.59L4 12l8 8 8-8z"/></svg>
<svg class="ic" style="left:2107.70px;top:669.39px;width:36px;height:36px" viewBox="0 0 24 24"><path fill="#000" d="M6 19c0 1.1.9 2 2 2h8c1.1 0 2-.9 2-2V7H6v12zM19 4h-3.5l-1-1h-5l-1 1H5v2h14V4z"/></svg>
<svg class="ic" style="left:839.50px;top:733.22px;width:37px;height:23px" viewBox="0 0 37 23"><rect x="0.85" y="0.85" width="34.9" height="20.9" rx="3" fill="none" stroke="#000" stroke-width="1.8"/><path d="M5.4 5.3H8.9L12.5 9.6L16.1 5.3H19.6V17.3H16.1V10.4L12.5 14.5L8.9 10.4V17.3H5.4Z" fill="#000"/><path d="M25.6 5.3H29.2V11.6H32.4L27.4 17.6L22.4 11.6H25.6Z" fill="#000"/></svg>
<svg class="ic" style="left:1489.00px;top:726.52px;width:36px;height:36px" viewBox="0 0 24 24"><path fill="#000" d="M3.9 12c0-1.71 1.39-3.1 3.1-3.1h4V7H7c-2.76 0-5 2.24-5 5s2.24 5 5 5h4v-1.9H7c-1.71 0-3.1-1.39-3.1-3.1zM8 13h8v-2H8v2zm9-6h-4v1.9h4c1.71 0 3.1 1.39 3.1 3.1s-1.39 3.1-3.1 3.1h-4V17h4c2.76 0 5-2.24 5-5s-2.24-5-5-5z"/></svg>
<svg class="ic" style="left:1562.00px;top:726.52px;width:36px;height:36px" viewBox="0 0 24 24"><path fill="#000" d="M20.54 5.23l-1.39-1.68C18.88 3.21 18.47 3 18 3H6c-.47 0-.88.21-1.16.55L3.46 5.23C3.17 5.57 3 6.02 3 6.5V19c0 1.1.9 2 2 2h14c1.1 0 2-.9 2-2V6.5c0-.48-.17-.93-.46-1.27zM12 17.5L6.5 12H10v-2h4v2h3.5L12 17.5zM5.12 5l.81-1h12l.94 1H5.12z"/></svg>
<svg class="ic" style="left:1635.00px;top:726.52px;width:36px;height:36px" viewBox="0 0 24 24"><path fill="#000" d="M19.35 10.04C18.67 6.59 15.64 4 12 4 9.11 4 6.6 5.64 5.35 8.04 2.34 8.36 0 10.91 0 14c0 3.31 2.69 6 6 6h13c2.76 0 5-2.24 5-5 0-2.64-2.05-4.78-4.65-4.96zM10 17l-3.5-3.5 1.41-1.41L10 14.17 15.18 9l1.41 1.41L10 17z"/></svg>
<svg class="ic" style="left:1708.30px;top:723.02px;width:36px;height:36px" viewBox="0 0 24 24"><path fill="#000" d="M4 12l1.41 1.41L11 7.83V20h2V7.83l5.58 5.59L20 12l-8-8-8 8z"/></svg>
<svg class="ic" style="left:1751.00px;top:723.02px;width:36px;height:36px" viewBox="0 0 24 24"><path fill="#000" d="M20 12l-1.41-1.41L13 16.17V4h-2v12.17l-5.58-5.59L4 12l8 8 8-8z"/></svg>
<svg class="ic" style="left:2107.70px;top:726.52px;width:36px;height:36px" viewBox="0 0 24 24"><path fill="#000" d="M6 19c0 1.1.9 2 2 2h8c1.1 0 2-.9 2-2V7H6v12zM19 4h-3.5l-1-1h-5l-1 1H5v2h14V4z"/></svg>
<svg class="ic" style="left:2180.60px;top:726.02px;width:30px;height:30px" viewBox="0 0 24 24"><path fill="#cbcbcb" d="M12 2C6.48 2 2 6.48 2 12s4.48 10 10 10 10-4.48 10-10S17.52 2 12 2zm-1 17.93c-3.95-.49-7-3.85-7-7.93 0-.62.08-1.21.21-1.79L9 15v1c0 1.1.9 2 2 2v1.93zm6.9-2.54c-.26-.81-1-1.39-1.9-1.39h-1v-3c0-.55-.45-1-1-1H8v-2h2c.55 0 1-.45 1-1V7h2c1.1 0 2-.9 2-2v-.41c2.93 1.19 5 4.06 5 7.41 0 2.08-.8 3.97-2.1 5.39z"/></svg>
<svg class="ic" style="left:839.7px;top:783.65px;width:36px;height:36px" viewBox="0 0 36 36"><circle cx="18" cy="18" r="18" fill="#6c9b0c"/><path d="M13.9 8.9Q10.4 8.9 10.4 12.2V15.5Q10.4 18 7.5 18.1Q10.4 18.2 10.4 20.7V24Q10.4 27.2 13.9 27.2M22.1 8.9Q25.6 8.9 25.6 12.2V15.5Q25.6 18 28.5 18.1Q25.6 18.2 25.6 20.7V24Q25.6 27.2 22.1 27.2" fill="none" stroke="#ecfccc" stroke-width="2.1"/><circle cx="13.9" cy="18.1" r="1.6" fill="#ecfccc"/><circle cx="18" cy="18.1" r="1.6" fill="#ecfccc"/><circle cx="22.1" cy="18.1" r="1.6" fill="#ecfccc"/></svg>
<svg class="ic" style="left:1489.00px;top:783.65px;width:36px;height:36px" viewBox="0 0 24 24"><path fill="#000" d="M3.9 12c0-1.71 1.39-3.1 3.1-3.1h4V7H7c-2.76 0-5 2.24-5 5s2.24 5 5 5h4v-1.9H7c-1.71 0-3.1-1.39-3.1-3.1zM8 13h8v-2H8v2zm9-6h-4v1.9h4c1.71 0 3.1 1.39 3.1 3.1s-1.39 3.1-3.1 3.1h-4V17h4c2.76 0 5-2.24 5-5s-2.24-5-5-5z"/></svg>
<svg class="ic" style="left:1562.00px;top:783.65px;width:36px;height:36px" viewBox="0 0 24 24"><path fill="#000" d="M20.54 5.23l-1.39-1.68C18.88 3.21 18.47 3 18 3H6c-.47 0-.88.21-1.16.55L3.46 5.23C3.17 5.57 3 6.02 3 6.5V19c0 1.1.9 2 2 2h14c1.1 0 2-.9 2-2V6.5c0-.48-.17-.93-.46-1.27zM12 17.5L6.5 12H10v-2h4v2h3.5L12 17.5zM5.12 5l.81-1h12l.94 1H5.12z"/></svg>
<svg class="ic" style="left:1635.00px;top:783.65px;width:36px;height:36px" viewBox="0 0 24 24"><path fill="#000" d="M19.35 10.04C18.67 6.59 15.64 4 12 4 9.11 4 6.6 5.64 5.35 8.04 2.34 8.36 0 10.91 0 14c0 3.31 2.69 6 6 6h13c2.76 0 5-2.24 5-5 0-2.64-2.05-4.78-4.65-4.96zM10 17l-3.5-3.5 1.41-1.41L10 14.17 15.18 9l1.41 1.41L10 17z"/></svg>
<svg class="ic" style="left:1708.30px;top:780.15px;width:36px;height:36px" viewBox="0 0 24 24"><path fill="#000" d="M4 12l1.41 1.41L11 7.83V20h2V7.83l5.58 5.59L20 12l-8-8-8 8z"/></svg>
<svg class="ic" style="left:1751.00px;top:780.15px;width:36px;height:36px" viewBox="0 0 24 24"><path fill="#000" d="M20 12l-1.41-1.41L13 16.17V4h-2v12.17l-5.58-5.59L4 12l8 8 8-8z"/></svg>
<svg class="ic" style="left:2107.70px;top:783.65px;width:36px;height:36px" viewBox="0 0 24 24"><path fill="#000" d="M6 19c0 1.1.9 2 2 2h8c1.1 0 2-.9 2-2V7H6v12zM19 4h-3.5l-1-1h-5l-1 1H5v2h14V4z"/></svg>
<svg class="ic" style="left:2180.60px;top:783.15px;width:30px;height:30px" viewBox="0 0 24 24"><path fill="#cbcbcb" d="M12 2C6.48 2 2 6.48 2 12s4.48 10 10 10 10-4.48 10-10S17.52 2 12 2zm-1 17.93c-3.95-.49-7-3.85-7-7.93 0-.62.08-1.21.21-1.79L9 15v1c0 1.1.9 2 2 2v1.93zm6.9-2.54c-.26-.81-1-1.39-1.9-1.39h-1v-3c0-.55-.45-1-1-1H8v-2h2c.55 0 1-.45 1-1V7h2c1.1 0 2-.9 2-2v-.41c2.93 1.19 5 4.06 5 7.41 0 2.08-.8 3.97-2.1 5.39z"/></svg>
<svg class="ic" style="left:839.50px;top:847.48px;width:37px;height:23px" viewBox="0 0 37 23"><rect x="0.85" y="0.85" width="34.9" height="20.9" rx="3" fill="none" stroke="#000" stroke-width="1.8"/><path d="M5.4 5.3H8.9L12.5 9.6L16.1 5.3H19.6V17.3H16.1V10.4L12.5 14.5L8.9 10.4V17.3H5.4Z" fill="#000"/><path d="M25.6 5.3H29.2V11.6H32.4L27.4 17.6L22.4 11.6H25.6Z" fill="#000"/></svg>
<svg class="ic" style="left:1489.00px;top:840.78px;width:36px;height:36px" viewBox="0 0 24 24"><path fill="#000" d="M3.9 12c0-1.71 1.39-3.1 3.1-3.1h4V7H7c-2.76 0-5 2.24-5 5s2.24 5 5 5h4v-1.9H7c-1.71 0-3.1-1.39-3.1-3.1zM8 13h8v-2H8v2zm9-6h-4v1.9h4c1.71 0 3.1 1.39 3.1 3.1s-1.39 3.1-3.1 3.1h-4V17h4c2.76 0 5-2.24 5-5s-2.24-5-5-5z"/></svg>
<svg class="ic" style="left:1562.00px;top:840.78px;width:36px;height:36px" viewBox="0 0 24 24"><path fill="#000" d="M20.54 5.23l-1.39-1.68C18.88 3.21 18.47 3 18 3H6c-.47 0-.88.21-1.16.55L3.46 5.23C3.17 5.57 3 6.02 3 6.5V19c0 1.1.9 2 2 2h14c1.1 0 2-.9 2-2V6.5c0-.48-.17-.93-.46-1.27zM12 17.5L6.5 12H10v-2h4v2h3.5L12 17.5zM5.12 5l.81-1h12l.94 1H5.12z"/></svg>
<svg class="ic" style="left:1635.00px;top:840.78px;width:36px;height:36px" viewBox="0 0 24 24"><path fill="#000" d="M19.35 10.04C18.67 6.59 15.64 4 12 4 9.11 4 6.6 5.64 5.35 8.04 2.34 8.36 0 10.91 0 14c0 3.31 2.69 6 6 6h13c2.76 0 5-2.24 5-5 0-2.64-2.05-4.78-4.65-4.96zM10 17l-3.5-3.5 1.41-1.41L10 14.17 15.18 9l1.41 1.41L10 17z"/></svg>
<svg class="ic" style="left:1708.30px;top:837.28px;width:36px;height:36px" viewBox="0 0 24 24"><path fill="#000" d="M4 12l1.41 1.41L11 7.83V20h2V7.83l5.58 5.59L20 12l-8-8-8 8z"/></svg>
<svg class="ic" style="left:1751.00px;top:837.28px;width:36px;height:36px" viewBox="0 0 24 24"><path fill="#000" d="M20 12l-1.41-1.41L13 16.17V4h-2v12.17l-5.58-5.59L4 12l8 8 8-8z"/></svg>
<svg class="ic" style="left:2107.70px;top:840.78px;width:36px;height:36px" viewBox="0 0 24 24"><path fill="#000" d="M6 19c0 1.1.9 2 2 2h8c1.1 0 2-.9 2-2V7H6v12zM19 4h-3.5l-1-1h-5l-1 1H5v2h14V4z"/></svg>
<svg class="ic" style="left:2180.60px;top:840.28px;width:30px;height:30px" viewBox="0 0 24 24"><path fill="#cbcbcb" d="M12 2C6.48 2 2 6.48 2 12s4.48 10 10 10 10-4.48 10-10S17.52 2 12 2zm-1 17.93c-3.95-.49-7-3.85-7-7.93 0-.62.08-1.21.21-1.79L9 15v1c0 1.1.9 2 2 2v1.93zm6.9-2.54c-.26-.81-1-1.39-1.9-1.39h-1v-3c0-.55-.45-1-1-1H8v-2h2c.55 0 1-.45 1-1V7h2c1.1 0 2-.9 2-2v-.41c2.93 1.19 5 4.06 5 7.41 0 2.08-.8 3.97-2.1 5.39z"/></svg>
<svg class="ic" style="left:839.7px;top:897.91px;width:36px;height:36px" viewBox="0 0 36 36"><circle cx="18" cy="18" r="18" fill="#6c9b0c"/><path d="M13.9 8.9Q10.4 8.9 10.4 12.2V15.5Q10.4 18 7.5 18.1Q10.4 18.2 10.4 20.7V24Q10.4 27.2 13.9 27.2M22.1 8.9Q25.6 8.9 25.6 12.2V15.5Q25.6 18 28.5 18.1Q25.6 18.2 25.6 20.7V24Q25.6 27.2 22.1 27.2" fill="none" stroke="#ecfccc" stroke-width="2.1"/><circle cx="13.9" cy="18.1" r="1.6" fill="#ecfccc"/><circle cx="18" cy="18.1" r="1.6" fill="#ecfccc"/><circle cx="22.1" cy="18.1" r="1.6" fill="#ecfccc"/></svg>
<svg class="ic" style="left:1489.00px;top:897.91px;width:36px;height:36px" viewBox="0 0 24 24"><path fill="#000" d="M3.9 12c0-1.71 1.39-3.1 3.1-3.1h4V7H7c-2.76 0-5 2.24-5 5s2.24 5 5 5h4v-1.9H7c-1.71 0-3.1-1.39-3.1-3.1zM8 13h8v-2H8v2zm9-6h-4v1.9h4c1.71 0 3.1 1.39 3.1 3.1s-1.39 3.1-3.1 3.1h-4V17h4c2.76 0 5-2.24 5-5s-2.24-5-5-5z"/></svg>
<svg class="ic" style="left:1562.00px;top:897.91px;width:36px;height:36px" viewBox="0 0 24 24"><path fill="#000" d="M20.54 5.23l-1.39-1.68C18.88 3.21 18.47 3 18 3H6c-.47 0-.88.21-1.16.55L3.46 5.23C3.17 5.57 3 6.02 3 6.5V19c0 1.1.9 2 2 2h14c1.1 0 2-.9 2-2V6.5c0-.48-.17-.93-.46-1.27zM12 17.5L6.5 12H10v-2h4v2h3.5L12 17.5zM5.12 5l.81-1h12l.94 1H5.12z"/></svg>
<svg class="ic" style="left:1635.00px;top:897.91px;width:36px;height:36px" viewBox="0 0 24 24"><path fill="#000" d="M19.35 10.04C18.67 6.59 15.64 4 12 4 9.11 4 6.6 5.64 5.35 8.04 2.34 8.36 0 10.91 0 14c0 3.31 2.69 6 6 6h13c2.76 0 5-2.24 5-5 0-2.64-2.05-4.78-4.65-4.96zM10 17l-3.5-3.5 1.41-1.41L10 14.17 15.18 9l1.41 1.41L10 17z"/></svg>
<svg class="ic" style="left:1708.30px;top:894.41px;width:36px;height:36px" viewBox="0 0 24 24"><path fill="#000" d="M4 12l1.41 1.41L11 7.83V20h2V7.83l5.58 5.59L20 12l-8-8-8 8z"/></svg>
<svg class="ic" style="left:1751.00px;top:894.41px;width:36px;height:36px" viewBox="0 0 24 24"><path fill="#000" d="M20 12l-1.41-1.41L13 16.17V4h-2v12.17l-5.58-5.59L4 12l8 8 8-8z"/></svg>
<svg class="ic" style="left:2107.70px;top:897.91px;width:36px;height:36px" viewBox="0 0 24 24"><path fill="#000" d="M6 19c0 1.1.9 2 2 2h8c1.1 0 2-.9 2-2V7H6v12zM19 4h-3.5l-1-1h-5l-1 1H5v2h14V4z"/></svg>
<svg class="ic" style="left:2180.60px;top:897.41px;width:30px;height:30px" viewBox="0 0 24 24"><path fill="#cbcbcb" d="M12 2C6.48 2 2 6.48 2 12s4.48 10 10 10 10-4.48 10-10S17.52 2 12 2zm-1 17.93c-3.95-.49-7-3.85-7-7.93 0-.62.08-1.21.21-1.79L9 15v1c0 1.1.9 2 2 2v1.93zm6.9-2.54c-.26-.81-1-1.39-1.9-1.39h-1v-3c0-.55-.45-1-1-1H8v-2h2c.55 0 1-.45 1-1V7h2c1.1 0 2-.9 2-2v-.41c2.93 1.19 5 4.06 5 7.41 0 2.08-.8 3.97-2.1 5.39z"/></svg>
<svg class="ic" style="left:839.7px;top:955.04px;width:36px;height:36px" viewBox="0 0 36 36"><rect x="0.5" y="0.4" width="35.5" height="35.6" rx="7.7" fill="#e40046"/><path d="M14.8 18.3L19.2 7.5L28.1 29.1M8.6 18.9H18.3M6.7 22.4H16.3M12.5 22.6L9.6 29.1" fill="none" stroke="#fff" stroke-width="1.5"/></svg>
<svg class="ic" style="left:1489.00px;top:955.04px;width:36px;height:36px" viewBox="0 0 24 24"><path fill="#000" d="M3.9 12c0-1.71 1.39-3.1 3.1-3.1h4V7H7c-2.76 0-5 2.24-5 5s2.24 5 5 5h4v-1.9H7c-1.71 0-3.1-1.39-3.1-3.1zM8 13h8v-2H8v2zm9-6h-4v1.9h4c1.71 0 3.1 1.39 3.1 3.1s-1.39 3.1-3.1 3.1h-4V17h4c2.76 0 5-2.24 5-5s-2.24-5-5-5z"/></svg>
<svg class="ic" style="left:1562.00px;top:955.04px;width:36px;height:36px" viewBox="0 0 24 24"><path fill="#000" d="M20.54 5.23l-1.39-1.68C18.88 3.21 18.47 3 18 3H6c-.47 0-.88.21-1.16.55L3.46 5.23C3.17 5.57 3 6.02 3 6.5V19c0 1.1.9 2 2 2h14c1.1 0 2-.9 2-2V6.5c0-.48-.17-.93-.46-1.27zM12 17.5L6.5 12H10v-2h4v2h3.5L12 17.5zM5.12 5l.81-1h12l.94 1H5.12z"/></svg>
<svg class="ic" style="left:1635.00px;top:955.04px;width:36px;height:36px" viewBox="0 0 24 24"><path fill="#000" d="M19.35 10.04C18.67 6.59 15.64 4 12 4 9.11 4 6.6 5.64 5.35 8.04 2.34 8.36 0 10.91 0 14c0 3.31 2.69 6 6 6h13c2.76 0 5-2.24 5-5 0-2.64-2.05-4.78-4.65-4.96zM10 17l-3.5-3.5 1.41-1.41L10 14.17 15.18 9l1.41 1.41L10 17z"/></svg>
<svg class="ic" style="left:1708.30px;top:951.54px;width:36px;height:36px" viewBox="0 0 24 24"><path fill="#000" d="M4 12l1.41 1.41L11 7.83V20h2V7.83l5.58 5.59L20 12l-8-8-8 8z"/></svg>
<svg class="ic" style="left:1751.00px;top:951.54px;width:36px;height:36px" viewBox="0 0 24 24"><path fill="#000" d="M20 12l-1.41-1.41L13 16.17V4h-2v12.17l-5.58-5.59L4 12l8 8 8-8z"/></svg>
<svg class="ic" style="left:2107.70px;top:955.04px;width:36px;height:36px" viewBox="0 0 24 24"><path fill="#000" d="M6 19c0 1.1.9 2 2 2h8c1.1 0 2-.9 2-2V7H6v12zM19 4h-3.5l-1-1h-5l-1 1H5v2h14V4z"/></svg>
<svg class="ic" style="left:839.50px;top:1018.87px;width:37px;height:23px" viewBox="0 0 37 23"><rect x="0.85" y="0.85" width="34.9" height="20.9" rx="3" fill="none" stroke="#000" stroke-width="1.8"/><path d="M5.4 5.3H8.9L12.5 9.6L16.1 5.3H19.6V17.3H16.1V10.4L12.5 14.5L8.9 10.4V17.3H5.4Z" fill="#000"/><path d="M25.6 5.3H29.2V11.6H32.4L27.4 17.6L22.4 11.6H25.6Z" fill="#000"/></svg>
<svg class="ic" style="left:1489.00px;top:1012.17px;width:36px;height:36px" viewBox="0 0 24 24"><path fill="#000" d="M3.9 12c0-1.71 1.39-3.1 3.1-3.1h4V7H7c-2.76 0-5 2.24-5 5s2.24 5 5 5h4v-1.9H7c-1.71 0-3.1-1.39-3.1-3.1zM8 13h8v-2H8v2zm9-6h-4v1.9h4c1.71 0 3.1 1.39 3.1 3.1s-1.39 3.1-3.1 3.1h-4V17h4c2.76 0 5-2.24 5-5s-2.24-5-5-5z"/></svg>
<svg class="ic" style="left:1562.00px;top:1012.17px;width:36px;height:36px" viewBox="0 0 24 24"><path fill="#000" d="M20.54 5.23l-1.39-1.68C18.88 3.21 18.47 3 18 3H6c-.47 0-.88.21-1.16.55L3.46 5.23C3.17 5.57 3 6.02 3 6.5V19c0 1.1.9 2 2 2h14c1.1 0 2-.9 2-2V6.5c0-.48-.17-.93-.46-1.27zM12 17.5L6.5 12H10v-2h4v2h3.5L12 17.5zM5.12 5l.81-1h12l.94 1H5.12z"/></svg>
<svg class="ic" style="left:1635.00px;top:1012.17px;width:36px;height:36px" viewBox="0 0 24 24"><path fill="#000" d="M19.35 10.04C18.67 6.59 15.64 4 12 4 9.11 4 6.6 5.64 5.35 8.04 2.34 8.36 0 10.91 0 14c0 3.31 2.69 6 6 6h13c2.76 0 5-2.24 5-5 0-2.64-2.05-4.78-4.65-4.96zM10 17l-3.5-3.5 1.41-1.41L10 14.17 15.18 9l1.41 1.41L10 17z"/></svg>
<svg class="ic" style="left:1708.30px;top:1008.67px;width:36px;height:36px" viewBox="0 0 24 24"><path fill="#000" d="M4 12l1.41 1.41L11 7.83V20h2V7.83l5.58 5.59L20 12l-8-8-8 8z"/></svg>
<svg class="ic" style="left:1751.00px;top:1008.67px;width:36px;height:36px" viewBox="0 0 24 24"><path fill="#000" d="M20 12l-1.41-1.41L13 16.17V4h-2v12.17l-5.58-5.59L4 12l8 8 8-8z"/></svg>
<svg class="ic" style="left:2107.70px;top:1012.17px;width:36px;height:36px" viewBox="0 0 24 24"><path fill="#000" d="M6 19c0 1.1.9 2 2 2h8c1.1 0 2-.9 2-2V7H6v12zM19 4h-3.5l-1-1h-5l-1 1H5v2h14V4z"/></svg>
<svg class="ic" style="left:2180.60px;top:1011.67px;width:30px;height:30px" viewBox="0 0 24 24"><path fill="#cbcbcb" d="M12 2C6.48 2 2 6.48 2 12s4.48 10 10 10 10-4.48 10-10S17.52 2 12 2zm-1 17.93c-3.95-.49-7-3.85-7-7.93 0-.62.08-1.21.21-1.79L9 15v1c0 1.1.9 2 2 2v1.93zm6.9-2.54c-.26-.81-1-1.39-1.9-1.39h-1v-3c0-.55-.45-1-1-1H8v-2h2c.55 0 1-.45 1-1V7h2c1.1 0 2-.9 2-2v-.41c2.93 1.19 5 4.06 5 7.41 0 2.08-.8 3.97-2.1 5.39z"/></svg>
<svg class="ic" style="left:839.7px;top:1069.30px;width:36px;height:36px" viewBox="0 0 36 36"><rect x="0.5" y="0.4" width="35.5" height="35.6" rx="7.7" fill="#e40046"/><path d="M14.8 18.3L19.2 7.5L28.1 29.1M8.6 18.9H18.3M6.7 22.4H16.3M12.5 22.6L9.6 29.1" fill="none" stroke="#fff" stroke-width="1.5"/></svg>
<svg class="ic" style="left:1489.00px;top:1069.30px;width:36px;height:36px" viewBox="0 0 24 24"><path fill="#000" d="M3.9 12c0-1.71 1.39-3.1 3.1-3.1h4V7H7c-2.76 0-5 2.24-5 5s2.24 5 5 5h4v-1.9H7c-1.71 0-3.1-1.39-3.1-3.1zM8 13h8v-2H8v2zm9-6h-4v1.9h4c1.71 0 3.1 1.39 3.1 3.1s-1.39 3.1-3.1 3.1h-4V17h4c2.76 0 5-2.24 5-5s-2.24-5-5-5z"/></svg>
<svg class="ic" style="left:1562.00px;top:1069.30px;width:36px;height:36px" viewBox="0 0 24 24"><path fill="#000" d="M20.54 5.23l-1.39-1.68C18.88 3.21 18.47 3 18 3H6c-.47 0-.88.21-1.16.55L3.46 5.23C3.17 5.57 3 6.02 3 6.5V19c0 1.1.9 2 2 2h14c1.1 0 2-.9 2-2V6.5c0-.48-.17-.93-.46-1.27zM12 17.5L6.5 12H10v-2h4v2h3.5L12 17.5zM5.12 5l.81-1h12l.94 1H5.12z"/></svg>
<svg class="ic" style="left:1635.00px;top:1069.30px;width:36px;height:36px" viewBox="0 0 24 24"><path fill="#000" d="M19.35 10.04C18.67 6.59 15.64 4 12 4 9.11 4 6.6 5.64 5.35 8.04 2.34 8.36 0 10.91 0 14c0 3.31 2.69 6 6 6h13c2.76 0 5-2.24 5-5 0-2.64-2.05-4.78-4.65-4.96zM10 17l-3.5-3.5 1.41-1.41L10 14.17 15.18 9l1.41 1.41L10 17z"/></svg>
<svg class="ic" style="left:1708.30px;top:1065.80px;width:36px;height:36px" viewBox="0 0 24 24"><path fill="#000" d="M4 12l1.41 1.41L11 7.83V20h2V7.83l5.58 5.59L20 12l-8-8-8 8z"/></svg>
<svg class="ic" style="left:1751.00px;top:1065.80px;width:36px;height:36px" viewBox="0 0 24 24"><path fill="#000" d="M20 12l-1.41-1.41L13 16.17V4h-2v12.17l-5.58-5.59L4 12l8 8 8-8z"/></svg>
<svg class="ic" style="left:2107.70px;top:1069.30px;width:36px;height:36px" viewBox="0 0 24 24"><path fill="#000" d="M6 19c0 1.1.9 2 2 2h8c1.1 0 2-.9 2-2V7H6v12zM19 4h-3.5l-1-1h-5l-1 1H5v2h14V4z"/></svg>
<svg class="ic" style="left:839.50px;top:1133.13px;width:37px;height:23px" viewBox="0 0 37 23"><rect x="0.85" y="0.85" width="34.9" height="20.9" rx="3" fill="none" stroke="#000" stroke-width="1.8"/><path d="M5.4 5.3H8.9L12.5 9.6L16.1 5.3H19.6V17.3H16.1V10.4L12.5 14.5L8.9 10.4V17.3H5.4Z" fill="#000"/><path d="M25.6 5.3H29.2V11.6H32.4L27.4 17.6L22.4 11.6H25.6Z" fill="#000"/></svg>
<svg class="ic" style="left:1489.00px;top:1126.43px;width:36px;height:36px" viewBox="0 0 24 24"><path fill="#000" d="M3.9 12c0-1.71 1.39-3.1 3.1-3.1h4V7H7c-2.76 0-5 2.24-5 5s2.24 5 5 5h4v-1.9H7c-1.71 0-3.1-1.39-3.1-3.1zM8 13h8v-2H8v2zm9-6h-4v1.9h4c1.71 0 3.1 1.39 3.1 3.1s-1.39 3.1-3.1 3.1h-4V17h4c2.76 0 5-2.24 5-5s-2.24-5-5-5z"/></svg>
<svg class="ic" style="left:1562.00px;top:1126.43px;width:36px;height:36px" viewBox="0 0 24 24"><path fill="#000" d="M20.54 5.23l-1.39-1.68C18.88 3.21 18.47 3 18 3H6c-.47 0-.88.21-1.16.55L3.46 5.23C3.17 5.57 3 6.02 3 6.5V19c0 1.1.9 2 2 2h14c1.1 0 2-.9 2-2V6.5c0-.48-.17-.93-.46-1.27zM12 17.5L6.5 12H10v-2h4v2h3.5L12 17.5zM5.12 5l.81-1h12l.94 1H5.12z"/></svg>
<svg class="ic" style="left:1635.00px;top:1126.43px;width:36px;height:36px" viewBox="0 0 24 24"><path fill="#000" d="M19.35 10.04C18.67 6.59 15.64 4 12 4 9.11 4 6.6 5.64 5.35 8.04 2.34 8.36 0 10.91 0 14c0 3.31 2.69 6 6 6h13c2.76 0 5-2.24 5-5 0-2.64-2.05-4.78-4.65-4.96zM19 18H6c-2.21 0-4-1.79-4-4 0-2.05 1.53-3.76 3.56-3.97l1.07-.11.5-.95C8.08 7.14 9.94 6 12 6c2.62 0 4.88 1.86 5.39 4.43l.3 1.5 1.53.11c1.56.1 2.78 1.41 2.78 2.96 0 1.65-1.35 3-3 3z"/></svg>
<svg class="ic" style="left:1708.30px;top:1122.93px;width:36px;height:36px" viewBox="0 0 24 24"><path fill="#000" d="M4 12l1.41 1.41L11 7.83V20h2V7.83l5.58 5.59L20 12l-8-8-8 8z"/></svg>
<svg class="ic" style="left:1751.00px;top:1122.93px;width:36px;height:36px" viewBox="0 0 24 24"><path fill="#000" d="M20 12l-1.41-1.41L13 16.17V4h-2v12.17l-5.58-5.59L4 12l8 8 8-8z"/></svg>
<svg class="ic" style="left:2107.70px;top:1126.43px;width:36px;height:36px" viewBox="0 0 24 24"><path fill="#000" d="M6 19c0 1.1.9 2 2 2h8c1.1 0 2-.9 2-2V7H6v12zM19 4h-3.5l-1-1h-5l-1 1H5v2h14V4z"/></svg>
<svg class="ic" style="left:2180.60px;top:1125.93px;width:30px;height:30px" viewBox="0 0 24 24"><path fill="#cbcbcb" d="M12 2C6.48 2 2 6.48 2 12s4.48 10 10 10 10-4.48 10-10S17.52 2 12 2zm-1 17.93c-3.95-.49-7-3.85-7-7.93 0-.62.08-1.21.21-1.79L9 15v1c0 1.1.9 2 2 2v1.93zm6.9-2.54c-.26-.81-1-1.39-1.9-1.39h-1v-3c0-.55-.45-1-1-1H8v-2h2c.55 0 1-.45 1-1V7h2c1.1 0 2-.9 2-2v-.41c2.93 1.19 5 4.06 5 7.41 0 2.08-.8 3.97-2.1 5.39z"/></svg>
<svg class="ic" style="left:839.8px;top:349px;width:36.2px;height:25px" viewBox="0 0 36.2 25"><path d="M0 0H12.5L15.5 3H36.2V25H0Z" fill="#777"/><rect x="11.2" y="13" width="13.5" height="10.1" rx="2.2" fill="#fff"/><path d="M14.4 13.4V9.9Q14.4 6.3 17.95 6.3Q21.5 6.3 21.5 9.9V13.4" fill="none" stroke="#fff" stroke-width="2.5"/><path d="M17.95 17.6V20.4" stroke="#777" stroke-width="1.9" stroke-linecap="round"/></svg>
<svg class="ic" style="left:839.8px;top:399px;width:36.2px;height:25px" viewBox="0 0 36.2 25"><path d="M0 0H12.5L15.5 3H36.2V25H0Z" fill="#777"/><rect x="11.2" y="13" width="13.5" height="10.1" rx="2.2" fill="#fff"/><path d="M14.4 13.4V9.9Q14.4 6.3 17.95 6.3Q21.5 6.3 21.5 9.9V13.4" fill="none" stroke="#fff" stroke-width="2.5"/><path d="M17.95 17.6V20.4" stroke="#777" stroke-width="1.9" stroke-linecap="round"/></svg>
<svg class="ic" style="left:839.8px;top:449px;width:36.2px;height:25px" viewBox="0 0 36.2 25"><path d="M0 0H12.5L15.5 3H36.2V25H0Z" fill="#777"/><rect x="11.2" y="13" width="13.5" height="10.1" rx="2.2" fill="#fff"/><path d="M14.4 13.4V9.9Q14.4 6.3 17.95 6.3Q21.5 6.3 21.5 9.9V13.4" fill="none" stroke="#fff" stroke-width="2.5"/><path d="M17.95 17.6V20.4" stroke="#777" stroke-width="1.9" stroke-linecap="round"/></svg>
<div class="tx" style="left:180.00px;top:42.83px;font-size:22px;line-height:22px;letter-spacing:-0.633px;color:#fff;font-weight:700;">API Management</div>
<div class="tx" style="left:396.20px;top:42.58px;font-size:22px;line-height:22px;letter-spacing:-0.429px;color:#fff;font-weight:700;">Developers Portal</div>
<div class="tx" style="left:2188.30px;top:27.51px;font-size:17px;line-height:17px;letter-spacing:0.000px;color:#000;">5</div>
<div class="tx" style="left:47.75px;top:149.66px;font-size:16px;line-height:16px;letter-spacing:-0.013px;color:#d3d3db;">Environment</div>
<div class="tx" style="left:48.75px;top:177.42px;font-size:21px;line-height:21px;letter-spacing:0.273px;color:#9e9fb0;">fr-apim-master-dev</div>
<div class="tx" style="left:98.20px;top:254.98px;font-size:22px;line-height:22px;letter-spacing:-0.199px;color:#fff;">Dashboard</div>
<div class="tx" style="left:98.00px;top:315.78px;font-size:22px;line-height:22px;letter-spacing:-0.320px;color:#fff;">APIs</div>
<div class="tx" style="left:98.20px;top:376.68px;font-size:22px;line-height:22px;letter-spacing:0.598px;color:#fff;">Applications</div>
<div class="tx" style="left:97.20px;top:437.38px;font-size:22px;line-height:22px;letter-spacing:-0.203px;color:#fff;">Gateways</div>
<div class="tx" style="left:98.20px;top:498.48px;font-size:22px;line-height:22px;letter-spacing:0.492px;color:#fff;">Audit</div>
<div class="tx" style="left:98.00px;top:559.58px;font-size:22px;line-height:22px;letter-spacing:-0.381px;color:#fff;">Messages</div>
<div class="tx" style="left:98.60px;top:620.28px;font-size:22px;line-height:22px;letter-spacing:0.608px;color:#fff;">Analytics</div>
<div class="tx" style="left:98.60px;top:681.28px;font-size:22px;line-height:22px;letter-spacing:0.753px;color:#fff;">Alerts</div>
<div class="tx" style="left:97.60px;top:742.58px;font-size:22px;line-height:22px;letter-spacing:0.615px;color:#fff;">Settings</div>
<div class="tx" style="left:97.30px;top:980.48px;font-size:22px;line-height:22px;letter-spacing:0.382px;color:#fff;">Organization</div>
<div class="tx" style="left:98.70px;top:1097.78px;font-size:22px;line-height:22px;letter-spacing:0.141px;color:#fff;">Collapse menu</div>
<div class="tx" style="left:384.00px;top:161.18px;font-size:22px;line-height:22px;letter-spacing:0.803px;color:#8c8b9f;">Portal</div>
<div class="tx" style="left:383.50px;top:867.18px;font-size:22px;line-height:22px;letter-spacing:-0.170px;color:#8c8b9f;">Gateway</div>
<div class="tx" style="left:397.00px;top:219.08px;font-size:22px;line-height:22px;letter-spacing:0.683px;color:#fff;">Analytics</div>
<div class="tx" style="left:397.00px;top:277.08px;font-size:22px;line-height:22px;letter-spacing:0.554px;color:#fff;">API Portal Information</div>
<div class="tx" style="left:397.00px;top:335.08px;font-size:22px;line-height:22px;letter-spacing:0.256px;color:#fff;">API Quality</div>
<div class="tx" style="left:397.00px;top:392.98px;font-size:22px;line-height:22px;letter-spacing:0.669px;color:#fff;">Authentication</div>
<div class="tx" style="left:396.00px;top:450.38px;font-size:22px;line-height:22px;letter-spacing:0.112px;color:#fff;">Categories</div>
<div class="tx" style="left:396.00px;top:508.48px;font-size:22px;line-height:22px;letter-spacing:0.602px;color:#fff;">Client Registration</div>
<div class="tx" style="left:396.00px;top:566.78px;font-size:22px;line-height:22px;letter-spacing:0.388px;color:#fff;">Documentation</div>
<div class="tx" style="left:396.00px;top:624.58px;font-size:22px;line-height:22px;letter-spacing:0.058px;color:#fff;">Metadata</div>
<div class="tx" style="left:396.00px;top:682.38px;font-size:22px;line-height:22px;letter-spacing:0.573px;color:#fff;">Settings</div>
<div class="tx" style="left:397.00px;top:740.08px;font-size:22px;line-height:22px;letter-spacing:-0.734px;color:#fff;">Theme</div>
<div class="tx" style="left:397.00px;top:797.88px;font-size:22px;line-height:22px;letter-spacing:-0.149px;color:#fff;">Top APIs</div>
<div class="tx" style="left:397.00px;top:925.38px;font-size:22px;line-height:22px;letter-spacing:0.236px;color:#fff;">API Logging</div>
<div class="tx" style="left:396.00px;top:982.58px;font-size:22px;line-height:22px;letter-spacing:0.597px;color:#fff;">Dictionaries</div>
<div class="tx" style="left:396.00px;top:1041.38px;font-size:22px;line-height:22px;letter-spacing:0.163px;color:#fff;">Sharding Tags</div>
<div class="tx" style="left:397.00px;top:1098.48px;font-size:22px;line-height:22px;letter-spacing:0.041px;color:#fff;">Tenants</div>
<div class="tx" style="left:1883.30px;top:175.58px;font-size:22px;line-height:22px;letter-spacing:0.860px;color:#1a5d5c;">Import multiple files</div>
<div class="tx" style="left:2121.90px;top:177.78px;font-size:22px;line-height:22px;letter-spacing:0.300px;color:#fff;transform:scaleX(0.8935);transform-origin:1.00px 0;-webkit-text-stroke:0.45px #fff;">FETCH ALL</div>
<div class="tx" style="left:839.00px;top:285.96px;font-size:18px;line-height:18px;letter-spacing:-0.005px;color:#777777;font-weight:700;">Name</div>
<div class="tx" style="left:1824.00px;top:285.71px;font-size:18px;line-height:18px;letter-spacing:0.089px;color:#777777;font-weight:700;">Last Update</div>
<div class="tx" style="left:900.00px;top:351.87px;font-size:20px;line-height:20px;letter-spacing:0.013px;color:#1a5d5c;">Header</div>
<div class="tx" style="left:900.50px;top:402.07px;font-size:20px;line-height:20px;letter-spacing:0.339px;color:#1a5d5c;">TopFooter</div>
<div class="tx" style="left:900.00px;top:452.27px;font-size:20px;line-height:20px;letter-spacing:0.371px;color:#1a5d5c;">Footer</div>
<div class="tx" style="left:899.80px;top:506.27px;font-size:20px;line-height:20px;letter-spacing:0.601px;color:#1a5d5c;">Right toc menu</div>
<div class="tx" style="left:1824.00px;top:506.27px;font-size:20px;line-height:20px;letter-spacing:0.234px;color:#151515;">Dec 27, 2021 8:10:12 AM</div>
<div class="tx" style="left:900.80px;top:563.40px;font-size:20px;line-height:20px;letter-spacing:0.223px;color:#1a5d5c;">Aside</div>
<div class="tx" style="left:1824.00px;top:563.40px;font-size:20px;line-height:20px;letter-spacing:0.234px;color:#151515;">Dec 27, 2021 3:21:07 AM</div>
<div class="tx" style="left:899.80px;top:620.53px;font-size:20px;line-height:20px;letter-spacing:0.477px;color:#1a5d5c;">bbbb</div>
<div class="tx" style="left:1824.00px;top:620.53px;font-size:20px;line-height:20px;letter-spacing:0.234px;color:#151515;">Dec 27, 2021 8:10:30 AM</div>
<div class="tx" style="left:900.80px;top:677.66px;font-size:20px;line-height:20px;letter-spacing:-2.123px;color:#1a5d5c;">aaa</div>
<div class="tx" style="left:1824.00px;top:677.66px;font-size:20px;line-height:20px;letter-spacing:0.234px;color:#151515;">Dec 27, 2021 7:16:40 AM</div>
<div class="tx" style="left:900.80px;top:734.79px;font-size:20px;line-height:20px;letter-spacing:2.043px;color:#1a5d5c;">tttt</div>
<div class="tx" style="left:1824.00px;top:734.79px;font-size:20px;line-height:20px;letter-spacing:0.234px;color:#151515;">Dec 27, 2021 7:17:03 AM</div>
<div class="tx" style="left:900.80px;top:791.92px;font-size:20px;line-height:20px;letter-spacing:0.498px;color:#1a5d5c;">openapi.yaml</div>
<div class="tx" style="left:1824.00px;top:791.92px;font-size:20px;line-height:20px;letter-spacing:0.234px;color:#151515;">Dec 27, 2021 7:21:06 AM</div>
<div class="tx" style="left:900.80px;top:849.05px;font-size:20px;line-height:20px;letter-spacing:0.814px;color:#1a5d5c;">Test Markdown with links</div>
<div class="tx" style="left:1825.00px;top:849.05px;font-size:20px;line-height:20px;letter-spacing:0.339px;color:#151515;">Jan 21, 2022 3:54:34 AM</div>
<div class="tx" style="left:900.80px;top:906.18px;font-size:20px;line-height:20px;letter-spacing:0.423px;color:#1a5d5c;">Swagger Petstore</div>
<div class="tx" style="left:1824.00px;top:906.18px;font-size:20px;line-height:20px;letter-spacing:0.385px;color:#151515;">Mar 24, 2022 10:55:21 AM</div>
<div class="tx" style="left:900.80px;top:963.31px;font-size:20px;line-height:20px;letter-spacing:0.659px;color:#1a5d5c;">Test Ascii</div>
<div class="tx" style="left:1825.00px;top:963.31px;font-size:20px;line-height:20px;letter-spacing:0.339px;color:#151515;">Jan 18, 2022 5:37:43 AM</div>
<div class="tx" style="left:899.80px;top:1020.44px;font-size:20px;line-height:20px;letter-spacing:0.510px;color:#1a5d5c;">MD Table of content</div>
<div class="tx" style="left:1825.00px;top:1020.44px;font-size:20px;line-height:20px;letter-spacing:0.339px;color:#151515;">Jan 21, 2022 6:03:55 AM</div>
<div class="tx" style="left:900.80px;top:1077.57px;font-size:20px;line-height:20px;letter-spacing:0.925px;color:#1a5d5c;">asciidoctor-highlight</div>
<div class="tx" style="left:1824.00px;top:1077.57px;font-size:20px;line-height:20px;letter-spacing:0.408px;color:#151515;">Mar 24, 2022 8:55:31 AM</div>
<div class="tx" style="left:901.70px;top:1134.70px;font-size:20px;line-height:20px;letter-spacing:0.435px;color:#777777;font-style:italic;">onlineTest</div>
<div class="tx" style="left:1825.00px;top:1134.70px;font-size:20px;line-height:20px;letter-spacing:0.331px;color:#151515;">Apr 27, 2022 1:38:43 PM</div>
<div style="position:absolute;left:2176px;top:1041.5px;width:85px;height:85px;border-radius:50%;background:#1d1e3b;box-shadow:0 3px 5px -1px rgba(0,0,0,.2),0 6px 10px 0 rgba(0,0,0,.14),0 1px 18px 0 rgba(0,0,0,.12)"></div><svg class="ic" style="left:2176px;top:1041.5px;width:85px;height:85px" viewBox="0 0 85 85"><path d="M42.5 31.8 V53.2 M31.8 42.5 H53.2" stroke="#fff" stroke-width="3"/></svg>
</div>
</body></html>
